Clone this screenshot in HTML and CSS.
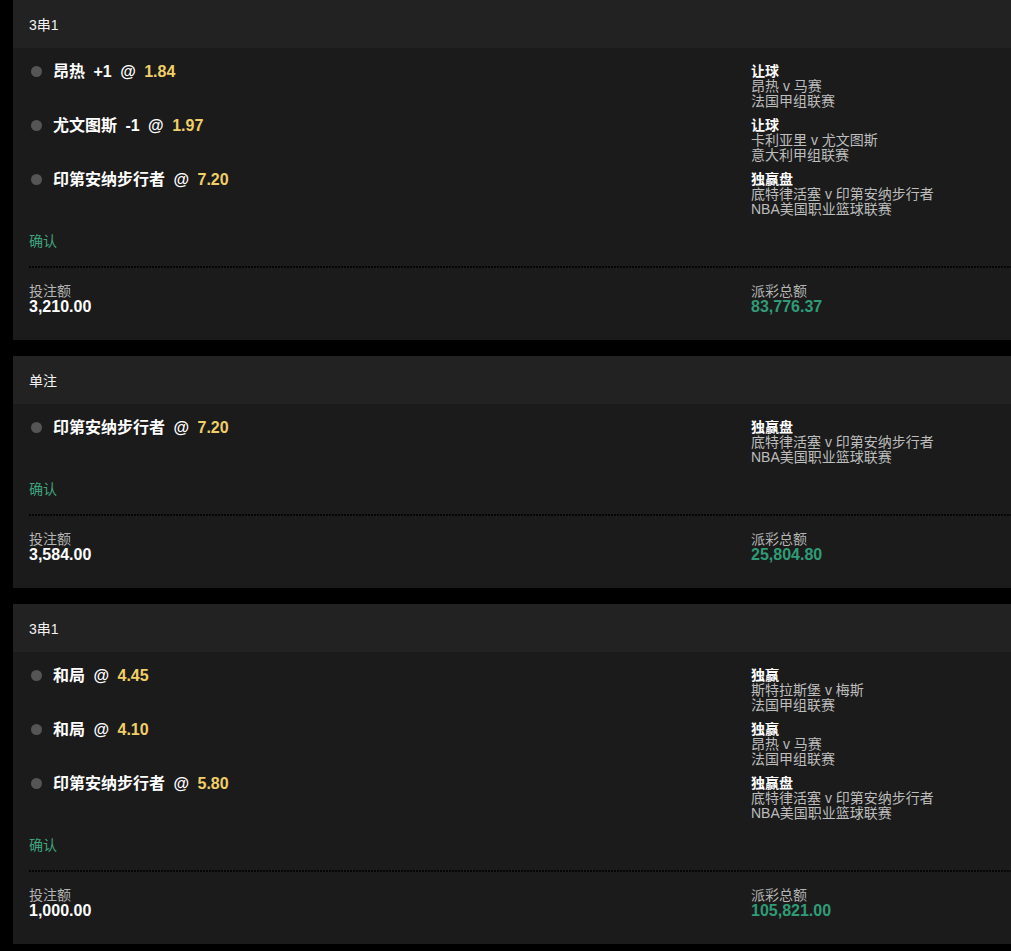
FILE: index.html
```html
<!DOCTYPE html>
<html lang="zh">
<head>
<meta charset="utf-8">
<title>注单</title>
<link rel="stylesheet" href="styles.css">
</head>
<body>
<div class="page">
  <section class="card">
    <header class="card-head">3串1</header>
    <div class="card-body">
      <div class="sel">
        <div class="sel-main"><span class="dot"></span><span class="name">昂热 +1 @ <span class="odds">1.84</span></span></div>
        <div class="sel-info"><div class="market">让球</div><div class="line">昂热 v 马赛</div><div class="line">法国甲组联赛</div></div>
      </div>
      <div class="sel">
        <div class="sel-main"><span class="dot"></span><span class="name">尤文图斯 -1 @ <span class="odds">1.97</span></span></div>
        <div class="sel-info"><div class="market">让球</div><div class="line">卡利亚里 v 尤文图斯</div><div class="line">意大利甲组联赛</div></div>
      </div>
      <div class="sel">
        <div class="sel-main"><span class="dot"></span><span class="name">印第安纳步行者 @ <span class="odds">7.20</span></span></div>
        <div class="sel-info"><div class="market">独赢盘</div><div class="line">底特律活塞 v 印第安纳步行者</div><div class="line">NBA美国职业篮球联赛</div></div>
      </div>
      <div class="status">确认</div>
      <div class="divider"></div>
      <div class="totals">
        <div class="total"><div class="label">投注额</div><div class="amount">3,210.00</div></div>
        <div class="total"><div class="label">派彩总额</div><div class="amount win">83,776.37</div></div>
      </div>
    </div>
  </section>

  <section class="card">
    <header class="card-head">单注</header>
    <div class="card-body">
      <div class="sel">
        <div class="sel-main"><span class="dot"></span><span class="name">印第安纳步行者 @ <span class="odds">7.20</span></span></div>
        <div class="sel-info"><div class="market">独赢盘</div><div class="line">底特律活塞 v 印第安纳步行者</div><div class="line">NBA美国职业篮球联赛</div></div>
      </div>
      <div class="status">确认</div>
      <div class="divider"></div>
      <div class="totals">
        <div class="total"><div class="label">投注额</div><div class="amount">3,584.00</div></div>
        <div class="total"><div class="label">派彩总额</div><div class="amount win">25,804.80</div></div>
      </div>
    </div>
  </section>

  <section class="card">
    <header class="card-head">3串1</header>
    <div class="card-body">
      <div class="sel">
        <div class="sel-main"><span class="dot"></span><span class="name">和局 @ <span class="odds">4.45</span></span></div>
        <div class="sel-info"><div class="market">独赢</div><div class="line">斯特拉斯堡 v 梅斯</div><div class="line">法国甲组联赛</div></div>
      </div>
      <div class="sel">
        <div class="sel-main"><span class="dot"></span><span class="name">和局 @ <span class="odds">4.10</span></span></div>
        <div class="sel-info"><div class="market">独赢</div><div class="line">昂热 v 马赛</div><div class="line">法国甲组联赛</div></div>
      </div>
      <div class="sel">
        <div class="sel-main"><span class="dot"></span><span class="name">印第安纳步行者 @ <span class="odds">5.80</span></span></div>
        <div class="sel-info"><div class="market">独赢盘</div><div class="line">底特律活塞 v 印第安纳步行者</div><div class="line">NBA美国职业篮球联赛</div></div>
      </div>
      <div class="status">确认</div>
      <div class="divider"></div>
      <div class="totals">
        <div class="total"><div class="label">投注额</div><div class="amount">1,000.00</div></div>
        <div class="total"><div class="label">派彩总额</div><div class="amount win">105,821.00</div></div>
      </div>
    </div>
  </section>
</div>
</body>
</html>
```

FILE: styles.css
```css
* { box-sizing: border-box; }
html, body {
  margin: 0;
  padding: 0;
  background: #000;
  overflow: hidden;
}
body {
  font-family: "Liberation Sans", Arial, "Noto Sans CJK SC", sans-serif;
  color: #fff;
}
.page {
  padding-left: 13px;
  display: flex;
  flex-direction: column;
  gap: 16px;
  width: 1040px;
}
.card {
  background: #1b1b1b;
}
.card-head {
  height: 48px;
  background: #222222;
  padding: 0 16px;
  display: flex;
  align-items: center;
  font-size: 14px;
  color: #f2f2f2;
}
.card-body {
  padding: 16px 16px 25px;
}
.sel {
  display: grid;
  grid-template-columns: 722px 1fr;
  height: 45px;
  margin-bottom: 9px;
}
.sel-main {
  display: flex;
  align-items: flex-start;
}
.dot {
  width: 11px;
  height: 11px;
  border-radius: 50%;
  background: #555;
  margin: 2px 11px 0 2px;
  flex: none;
}
.name {
  font-size: 16px;
  font-weight: bold;
  line-height: 15px;
  word-spacing: 4px;
  color: #fff;
}
.odds {
  color: #f0cf66;
}
.sel-info {
  font-size: 14px;
  line-height: 15px;
}
.market {
  font-weight: bold;
  color: #fff;
}
.line {
  color: #bdbdbd;
}
.status {
  margin-top: 16px;
  font-size: 14px;
  line-height: 16px;
  color: #3fa47f;
}
.divider {
  margin-top: 17px;
  height: 2px;
  background-image: repeating-linear-gradient(to right, #050505 0 2px, transparent 2px 3px);
}
.totals {
  display: grid;
  grid-template-columns: 722px 1fr;
  padding-top: 15px;
}
.label {
  font-size: 14px;
  line-height: 16px;
  color: #b5b5b5;
}
.amount {
  font-size: 16px;
  font-weight: bold;
  line-height: 16px;
  color: #fff;
}
.amount.win {
  color: #2f9b77;
}
```
